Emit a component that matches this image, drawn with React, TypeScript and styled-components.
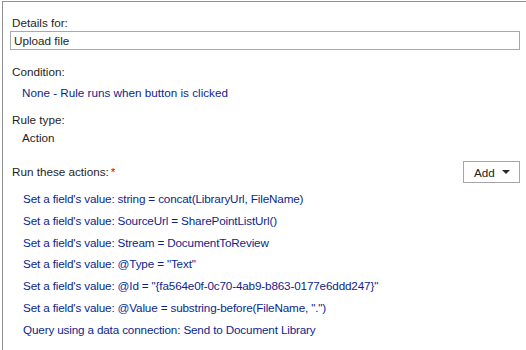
import React from 'react';
import styled, { createGlobalStyle } from 'styled-components';

const GlobalStyle = createGlobalStyle`
  html, body {
    margin: 0;
    padding: 0;
    background: #ffffff;
  }
  body {
    font-family: "Liberation Sans", Arial, sans-serif;
    font-size: 11.7px;
    color: #1e1e1e;
  }
`;

const Pane = styled.div`
  margin: 1px 0 0 2px;
  height: 349px;
  box-sizing: border-box;
  border-top: 1px solid #8f9091;
  border-left: 1px solid #8f9091;
  padding: 13px 6px 0 7px;
  overflow: hidden;
`;

const Label = styled.div<{ $gap?: number }>`
  line-height: 16px;
  padding-left: 2px;
  margin-top: ${p => p.$gap ?? 0}px;
`;

const NameInput = styled.input`
  display: block;
  width: 100%;
  height: 19px;
  box-sizing: border-box;
  border: 1px solid #a9a9a9;
  padding: 0 0 0 3px;
  font-family: inherit;
  font-size: 11.7px;
  color: #1e1e1e;
  outline: none;
`;

const Value = styled.div<{ $gap?: number; $link?: boolean }>`
  line-height: 16px;
  padding-left: 12px;
  margin-top: ${p => p.$gap ?? 0}px;
  color: ${p => (p.$link ? '#0c1f8f' : '#1e1e1e')};
`;

const ActionsHeader = styled.div`
  display: flex;
  align-items: center;
  justify-content: space-between;
  margin-top: 15px;
`;

const Required = styled.span`
  color: #e00000;
  margin-left: 2px;
`;

const AddButton = styled.button`
  display: flex;
  align-items: center;
  gap: 7px;
  width: 57px;
  height: 22px;
  box-sizing: border-box;
  border: 1px solid #a6a6a6;
  background: #ffffff;
  padding: 0 0 0 10px;
  font-family: inherit;
  font-size: 11.7px;
  color: #1e1e1e;
`;

const Caret = styled.span`
  width: 0;
  height: 0;
  border-left: 4px solid transparent;
  border-right: 4px solid transparent;
  border-top: 4px solid #2a2a2a;
`;

const ActionList = styled.div`
  margin-top: 5px;
`;

const ActionRow = styled.div`
  line-height: 21.8px;
  height: 21.8px;
  padding-left: 13px;
  color: #0c1f8f;
  letter-spacing: -0.15px;
  white-space: nowrap;
`;

const actions = [
  "Set a field's value: string = concat(LibraryUrl, FileName)",
  "Set a field's value: SourceUrl = SharePointListUrl()",
  "Set a field's value: Stream = DocumentToReview",
  'Set a field\'s value: @Type = "Text"',
  'Set a field\'s value: @Id = "{fa564e0f-0c70-4ab9-b863-0177e6ddd247}"',
  'Set a field\'s value: @Value = substring-before(FileName, ".")',
  'Query using a data connection: Send to Document Library',
];

export default function App() {
  return (
    <>
      <GlobalStyle />
      <Pane>
        <Label>Details for:</Label>
        <NameInput defaultValue="Upload file" />
        <Label $gap={14}>Condition:</Label>
        <Value $gap={5} $link>None - Rule runs when button is clicked</Value>
        <Label $gap={11}>Rule type:</Label>
        <Value $gap={2}>Action</Value>
        <ActionsHeader>
          <Label>
            Run these actions:<Required>*</Required>
          </Label>
          <AddButton>
            Add <Caret />
          </AddButton>
        </ActionsHeader>
        <ActionList>
          {actions.map(a => (
            <ActionRow key={a}>{a}</ActionRow>
          ))}
        </ActionList>
      </Pane>
    </>
  );
}
